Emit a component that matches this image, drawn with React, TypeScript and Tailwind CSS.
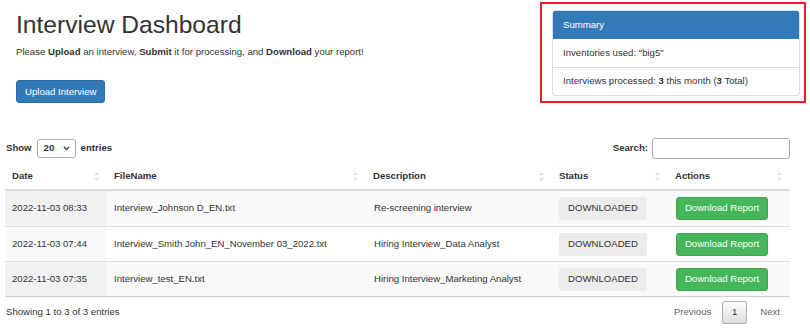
import React from "react";

const SortIcon = () => (
  <svg width="5" height="9" viewBox="0 0 5 9" className="shrink-0">
    <polygon points="2.5,0 5,3 0,3" fill="#e0e0e0" />
    <polygon points="0,6 5,6 2.5,9" fill="#e0e0e0" />
  </svg>
);

const rows = [
  {
    date: "2022-11-03 08:33",
    file: "Interview_Johnson D_EN.txt",
    desc: "Re-screening interview",
  },
  {
    date: "2022-11-03 07:44",
    file: "Interview_Smith John_EN_November 03_2022.txt",
    desc: "Hiring Interview_Data Analyst",
  },
  {
    date: "2022-11-03 07:35",
    file: "Interview_test_EN.txt",
    desc: "Hiring Interview_Marketing Analyst",
  },
];

const cols = "grid grid-cols-[102px_259px_186px_116px_122px]";

export default function App() {
  return (
    <div
      className="w-[810px] h-[335px] bg-white text-[#333] text-[9.6px] overflow-hidden"
      style={{ fontFamily: '"Liberation Sans", Arial, Helvetica, sans-serif' }}
    >
      {/* Top section */}
      <div className="flex justify-between">
        <div className="pl-[16px] pt-[12px]">
          <h1 className="text-[24.6px] leading-[25px] font-normal">Interview Dashboard</h1>
          <p className="mt-[8px] leading-[14px]">
            Please <b>Upload</b> an interview, <b>Submit</b> it for processing, and{" "}
            <b>Download</b> your report!
          </p>
          <button className="mt-[21px] h-[23px] px-[8px] bg-[#337ab7] border border-[#2e6da4] rounded-[3px] text-white text-[9.6px] leading-[21px]">
            Upload Interview
          </button>
        </div>
        <div className="mt-[2px] mr-[4px] w-[266px] border-2 border-[#ec1c24] pl-[10px] pr-[4px] pt-[6px] pb-[5px]">
          <div className="border border-[#ddd] rounded-[3px] overflow-hidden">
            <div className="h-[28px] bg-[#337ab7] text-white pl-[10px] flex items-center">Summary</div>
            <div className="h-[28px] pl-[10px] flex items-center">Inventories used: "big5"</div>
            <div className="h-[28px] pl-[10px] flex items-center border-t border-[#ddd]">
              <span>
                Interviews processed: <b>3</b> this month (<b>3</b> Total)
              </span>
            </div>
          </div>
        </div>
      </div>

      {/* Table section */}
      <div className="ml-[5px] w-[785px]">
        <div className="mt-[35px] h-[21px] flex items-center justify-between">
          <div className="flex items-center font-bold pl-[1px]">
            <span>Show</span>
            <div className="ml-[5px] mr-[5px] w-[39px] h-[19px] border border-[#aaa] rounded-[3px] flex items-center justify-between pl-[6px] pr-[5px] font-bold">
              <span>20</span>
              <svg width="7" height="5" viewBox="0 0 7 5">
                <polyline points="0.8,0.8 3.5,3.6 6.2,0.8" fill="none" stroke="#333" strokeWidth="1.3" />
              </svg>
            </div>
            <span>entries</span>
          </div>
          <div className="flex items-center font-bold">
            <span>Search:</span>
            <div className="ml-[4px] w-[138px] h-[21px] border border-[#aaa] rounded-[3px] bg-white" />
          </div>
        </div>

        <div className="mt-[4px]">
          <div className={`${cols} h-[28px] border-b-2 border-[#dcdcdc] font-bold`}>
            {["Date", "FileName", "Description", "Status", "Actions"].map((h) => (
              <div key={h} className="flex items-center justify-between pl-[7px] pr-[8px]">
                <span>{h}</span>
                <SortIcon />
              </div>
            ))}
          </div>
          {rows.map((r, i) => {
            const odd = i % 2 === 0;
            return (
              <div
                key={i}
                className={`${cols} h-[35px] ${i > 0 ? "border-t border-[#ddd]" : ""} ${
                  odd ? "bg-[#f9f9f9]" : "bg-white"
                }`}
              >
                <div className={`flex items-center pl-[7px] ${odd ? "bg-[#f1f1f1]" : "bg-[#fafafa]"}`}>
                  {r.date}
                </div>
                <div className="flex items-center pl-[7px]">{r.file}</div>
                <div className="flex items-center pl-[8px]">{r.desc}</div>
                <div className="flex items-center pl-[7px]">
                  <span className="h-[23px] w-[88px] rounded-[3px] bg-[#ececec] flex items-center justify-center">
                    DOWNLOADED
                  </span>
                </div>
                <div className="flex items-center pl-[8px]">
                  <span className="h-[23px] w-[92px] rounded-[3px] bg-[#45b65a] border border-[#3ea552] text-white flex items-center justify-center">
                    Download Report
                  </span>
                </div>
              </div>
            );
          })}
          <div className="border-t border-[#cfcfcf]" />
        </div>

        <div className="mt-[4px] flex items-center justify-between">
          <span className="pl-[1px]">Showing 1 to 3 of 3 entries</span>
          <div className="flex items-center text-[#666] mr-[10px]">
            <span className="mr-[11px]">Previous</span>
            <span className="w-[25px] h-[23px] border border-[#b0b0b0] rounded-[2px] bg-gradient-to-b from-white to-[#dcdcdc] text-[#333] flex items-center justify-center">
              1
            </span>
            <span className="ml-[13px]">Next</span>
          </div>
        </div>
      </div>
    </div>
  );
}
